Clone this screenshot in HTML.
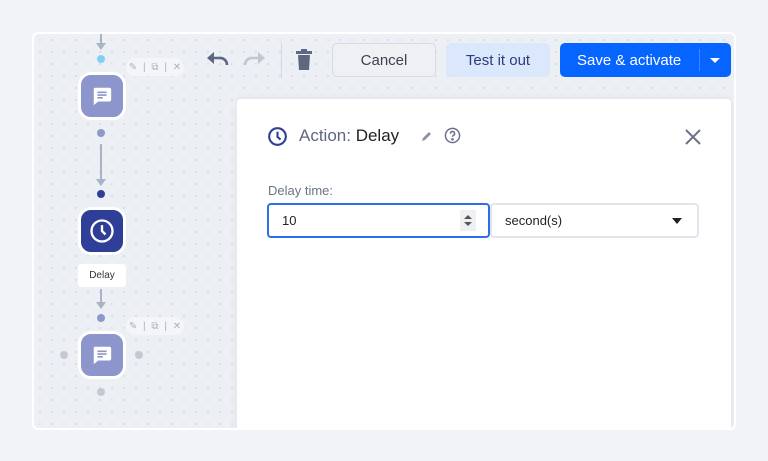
<!DOCTYPE html>
<html><head><style>
*{box-sizing:border-box;margin:0;padding:0}
body{width:768px;height:461px;background:#f2f3f6;font-family:"Liberation Sans",sans-serif;position:relative;overflow:hidden}
.frame{position:absolute;left:32px;top:32px;width:704px;height:398px;border:2px solid #fff;border-radius:6px;background-color:#eceff4;background-image:radial-gradient(#d9dde6 1px,transparent 1.2px);background-size:12px 12px;overflow:hidden}
.abs{position:absolute}
.node{position:absolute;width:42px;height:42px;border-radius:13px;background:#8c96cc;border:3px solid #fff;box-sizing:content-box;display:flex;align-items:center;justify-content:center}
.dot{position:absolute;width:8px;height:8px;border-radius:50%;background:#8e98c9}
.line{position:absolute;width:2px;background:#a9b3c6}
.arrow{position:absolute;width:0;height:0;border-left:5px solid transparent;border-right:5px solid transparent;border-top:7px solid #a9b3c6}
.tools{position:absolute;width:58px;height:18px;border-radius:9px;background:#f4f5f8;display:flex;align-items:center;justify-content:space-around;color:#aab0bd;font-size:10px}
.btn{position:absolute;height:34px;border-radius:5px;font-size:15px;display:flex;align-items:center;justify-content:center}
.panel{position:absolute;left:203px;top:65px;width:494px;height:340px;background:#fff;border-radius:4px;box-shadow:0 0 8px rgba(0,0,0,.06)}
</style></head><body>
<div class="frame">
 <div class="line" style="left:66px;top:0;height:10px"></div>
 <div class="arrow" style="left:62px;top:9px"></div>
 <div class="dot" style="left:63px;top:21px;background:#7fd0f5"></div>
 <div class="tools" style="left:92px;top:24px">✎<span>|</span>⧉<span>|</span>✕</div>
 <div class="node" style="left:44px;top:38px"><svg width="22" height="22" viewBox="0 0 24 24"><path fill="#fff" d="M4 3h16a2 2 0 0 1 2 2v11a2 2 0 0 1-2 2H8l-5 4V5a2 2 0 0 1 1-2z"/><path stroke="#8c96cc" stroke-width="1.8" d="M7 8h10M7 11h10M7 14h6"/></svg></div>
 <div class="dot" style="left:63px;top:95px"></div>
 <div class="line" style="left:66px;top:110px;height:36px"></div>
 <div class="arrow" style="left:62px;top:145px"></div>
 <div class="dot" style="left:63px;top:156px;background:#2f3f98"></div>
 <div class="node" style="left:44px;top:173px;background:#2f3f98"><svg width="28" height="28" viewBox="0 0 24 24" fill="none" stroke="#fff" stroke-width="2"><circle cx="12" cy="12" r="9"/><path d="M12 7v5l3 3"/></svg></div>
 <div class="abs" style="left:44px;top:230px;width:48px;height:23px;background:#fff;border-radius:3px;font-size:10px;color:#333;display:flex;align-items:center;justify-content:center">Delay</div>
 <div class="line" style="left:66px;top:255px;height:14px"></div>
 <div class="arrow" style="left:62px;top:268px"></div>
 <div class="dot" style="left:63px;top:280px"></div>
 <div class="tools" style="left:92px;top:283px">✎<span>|</span>⧉<span>|</span>✕</div>
 <div class="node" style="left:44px;top:297px"><svg width="22" height="22" viewBox="0 0 24 24"><path fill="#fff" d="M4 3h16a2 2 0 0 1 2 2v11a2 2 0 0 1-2 2H8l-5 4V5a2 2 0 0 1 1-2z"/><path stroke="#8c96cc" stroke-width="1.8" d="M7 8h10M7 11h10M7 14h6"/></svg></div>
 <div class="dot" style="left:26px;top:317px;background:#c3c8d3"></div>
 <div class="dot" style="left:101px;top:317px;background:#c3c8d3"></div>
 <div class="dot" style="left:63px;top:354px;background:#c3c8d3"></div>
 <svg class="abs" style="left:172px;top:16px" width="24" height="20" viewBox="0 0 24 20"><path d="M7 8h6a7 7 0 0 1 8 7" fill="none" stroke="#5d6780" stroke-width="2.6"/><path d="M1 8l7-6v12z" fill="#5d6780"/></svg>
 <svg class="abs" style="left:208px;top:16px" width="24" height="20" viewBox="0 0 24 20"><path d="M17 8h-6a7 7 0 0 0-8 7" fill="none" stroke="#c0c6d2" stroke-width="2.6"/><path d="M23 8l-7-6v12z" fill="#c0c6d2"/></svg>
 <div class="abs" style="left:247px;top:8px;width:1px;height:36px;background:#d3d7df"></div>
 <svg class="abs" style="left:262px;top:15px" width="16" height="22" viewBox="0 0 16 22"><rect x="0" y="2" width="16" height="3" fill="#5d6780"/><rect x="5" y="0" width="6" height="3" fill="#5d6780"/><path d="M2 6h12l-1 15H3z" fill="#5d6780"/></svg>
 <div class="btn" style="left:298px;top:9px;width:104px;border:1px solid #d6dae2;color:#3d4150;background:#eef0f4">Cancel</div>
 <div class="btn" style="left:412px;top:9px;width:104px;background:#dbe7fb;color:#2d3a80">Test it out</div>
 <div class="btn" style="left:526px;top:9px;width:171px;background:#0765ff;color:#fff;justify-content:flex-start;padding-left:17px">Save &amp; activate
  <div class="abs" style="left:139px;top:6px;width:1px;height:22px;background:#3f86ff"></div>
  <div class="abs" style="left:150px;top:15px;border-left:5px solid transparent;border-right:5px solid transparent;border-top:5px solid #fff"></div></div>
 <div class="panel">
  <svg class="abs" style="left:30px;top:27px" width="21" height="21" viewBox="0 0 24 24" fill="none" stroke="#2f3f98" stroke-width="2.4"><circle cx="12" cy="12" r="9.5"/><path d="M12 6.5v6l3.5 3"/></svg>
  <div class="abs" style="left:62px;top:27px;font-size:17px;color:#5d6780">Action: <span style="color:#222">Delay</span></div>
  <svg class="abs" style="left:184px;top:31px" width="12" height="12" viewBox="0 0 12 12"><path d="M1 11l1-3 6-6 2 2-6 6z" fill="#8a91a3"/></svg>
  <svg class="abs" style="left:207px;top:28px" width="17" height="17" viewBox="0 0 18 18" fill="none" stroke="#6b7388" stroke-width="1.6"><circle cx="9" cy="9" r="7.5"/><path d="M6.8 7a2.2 2.2 0 1 1 3 2c-.6.3-.8.7-.8 1.4"/><circle cx="9" cy="13" r=".6" fill="#6b7388"/></svg>
  <svg class="abs" style="left:448px;top:30px" width="16" height="16" viewBox="0 0 16 16" stroke="#6b7388" stroke-width="2"><path d="M1 1l14 14M15 1L1 15"/></svg>
  <div class="abs" style="left:31px;top:84px;font-size:13px;color:#6b7388">Delay time:</div>
  <div class="abs" style="left:30px;top:104px;width:223px;height:35px;border:2px solid #2d6fe8;border-radius:4px;font-size:13px;color:#222;padding:8px 0 0 13px">10
   <div class="abs" style="left:191px;top:5px;width:16px;height:21px;background:#eef0f3"><svg width="16" height="21" viewBox="0 0 16 21"><path d="M4 9l4-4 4 4zM4 12l4 4 4-4z" fill="#555"/></svg></div></div>
  <div class="abs" style="left:253px;top:104px;width:209px;height:35px;border:2px solid #e2e5eb;border-radius:4px;font-size:13px;color:#222;padding:8px 0 0 13px">second(s)
   <div class="abs" style="left:180px;top:13px;border-left:5px solid transparent;border-right:5px solid transparent;border-top:6px solid #222"></div></div>
 </div>
</div>
</body></html>
